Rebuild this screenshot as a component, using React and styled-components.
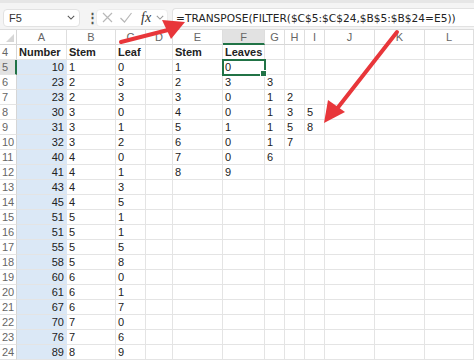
import React from "react"
import styled, { createGlobalStyle } from "styled-components"

const GlobalStyle = createGlobalStyle`
  html, body {
    margin: 0;
    padding: 0;
    background: #ffffff;
    overflow: hidden;
  }
  body {
    font-family: "Liberation Sans", Arial, sans-serif;
  }
`

const COLS = ["A", "B", "C", "D", "E", "F", "G", "H", "I", "J", "K", "L"]
const WIDTHS = "17px 50px 49px 30px 27px 50px 42px 20px 20px 20px 50px 50px 1fr"

const colA = [10, 23, 23, 30, 31, 32, 40, 41, 43, 45, 51, 51, 55, 58, 60, 61, 67, 70, 76, 89]
const colB = [1, 2, 2, 3, 3, 3, 4, 4, 4, 4, 5, 5, 5, 5, 6, 6, 6, 7, 7, 8]
const colC = [0, 3, 3, 0, 1, 2, 0, 1, 3, 5, 1, 1, 5, 8, 0, 1, 7, 0, 6, 9]
const leaves = [[0], [3, 3], [0, 1, 2], [0, 1, 3, 5], [1, 1, 5, 8], [0, 1, 7], [0, 6], [9]]

const App = () => {
  const rows = []
  // header row 4
  rows.push({
    n: 4,
    cells: ["Number", "Stem", "Leaf", "", "Stem", "Leaves", "", "", "", "", "", ""],
    bold: true,
  })
  for (let i = 0; i < 20; i++) {
    const l = leaves[i] || []
    rows.push({
      n: i + 5,
      cells: [
        colA[i],
        colB[i],
        colC[i],
        "",
        i < 8 ? i + 1 : "",
        l[0] ?? "",
        l[1] ?? "",
        l[2] ?? "",
        l[3] ?? "",
        "",
        "",
        "",
      ],
    })
  }

  return (
    <Page>
      <GlobalStyle />
      <FormulaBar>
        <NameBox>
          <span>F5</span>
          <Chevron viewBox="0 0 10 6">
            <path d="M1 1l4 4 4-4" />
          </Chevron>
        </NameBox>
        <Dots>⋮</Dots>
        <IconGroup>
          <svg width="13" height="13" viewBox="0 0 13 13">
            <path d="M2 2l9 9M11 2l-9 9" stroke="#b8b8b8" strokeWidth="1.2" fill="none" />
          </svg>
          <svg width="14" height="13" viewBox="0 0 14 13">
            <path d="M1.5 7l4 4 7-9" stroke="#b8b8b8" strokeWidth="1.2" fill="none" />
          </svg>
          <Fx>fx</Fx>
          <Chevron viewBox="0 0 10 6" $light>
            <path d="M1 1l4 4 4-4" />
          </Chevron>
        </IconGroup>
        <FormulaInput>=TRANSPOSE(FILTER($C$5:$C$24,$B$5:$B$24=E5))</FormulaInput>
      </FormulaBar>

      <Sheet>
        <Corner>
          <svg width="8" height="8" viewBox="0 0 8 8">
            <path d="M8 0v8H0z" fill="#d6d6d6" />
          </svg>
        </Corner>
        {COLS.map((c) => (
          <ColHead key={c} $active={c === "F"}>
            {c}
          </ColHead>
        ))}
        {rows.map((r) => (
          <React.Fragment key={r.n}>
            <RowHead $active={r.n === 5}>{r.n}</RowHead>
            {r.cells.map((v, j) => (
              <Cell
                key={j}
                $bold={r.bold}
                $right={j === 0 && !r.bold}
                $blue={j === 0 && !r.bold}
                $selected={r.n === 5 && j === 5}
              >
                {v}
                {r.n === 5 && j === 5 && <Handle />}
              </Cell>
            ))}
          </React.Fragment>
        ))}
      </Sheet>

      <Arrows width="474" height="361" viewBox="0 0 474 361">
        <g stroke="#e8363a" strokeWidth="4" strokeLinecap="round">
          <line x1="121" y1="42" x2="168" y2="30" />
          <line x1="397" y1="32" x2="336" y2="110" />
        </g>
        <g fill="#e8363a">
          <polygon points="185,22 162,20 171,39" />
          <polygon points="324,123 328,100 345,112" />
        </g>
      </Arrows>
    </Page>
  )
}

export default App

const Page = styled.div`
  position: relative;
  width: 474px;
  height: 361px;
  overflow: hidden;
  background: #ffffff;
`

const FormulaBar = styled.div`
  height: 30px;
  box-sizing: border-box;
  display: flex;
  align-items: center;
  padding: 3px 0 0 3px;
  background: #f4f4f4;
  border-top: 3px solid #e6e6e6;
  border-bottom: 1px solid #dcdcdc;
`

const NameBox = styled.div`
  width: 77px;
  height: 18px;
  box-sizing: border-box;
  display: flex;
  align-items: center;
  justify-content: space-between;
  padding: 0 4px 0 5px;
  background: #ffffff;
  border: 1px solid #e2e2e2;
  border-radius: 4px;
  font-size: 11px;
  color: #333;
`

const Chevron = styled.svg`
  width: 8px;
  height: 5px;
  fill: none;
  stroke: ${(p) => (p.$light ? "#9a9a9a" : "#555")};
  stroke-width: 1.3;
`

const Dots = styled.span`
  font-size: 13px;
  color: #555;
  font-weight: bold;
  width: 6px;
  margin: 0 4px 0 6px;
  text-align: center;
`

const IconGroup = styled.div`
  height: 18px;
  box-sizing: border-box;
  display: flex;
  align-items: center;
  gap: 5px;
  padding: 0 3px 0 4px;
  margin-right: 4px;
  background: #ffffff;
  border-radius: 4px;
  border: 1px solid #ececec;
`

const Fx = styled.span`
  font-family: "Liberation Serif", "Times New Roman", serif;
  font-style: italic;
  font-size: 14px;
  color: #333;
  margin-left: 3px;
  line-height: 1;
`

const FormulaInput = styled.div`
  flex: 1;
  height: 19px;
  box-sizing: border-box;
  display: flex;
  align-items: center;
  padding-left: 3px;
  background: #ffffff;
  border: 1px solid #e2e2e2;
  border-right: none;
  border-radius: 4px 0 0 4px;
  font-family: "DejaVu Sans", sans-serif;
  font-size: 10.6px;
  color: #222;
  white-space: nowrap;
`

const Sheet = styled.div`
  display: grid;
  grid-template-columns: ${WIDTHS};
  grid-auto-rows: 15px;
  font-size: 11px;
  color: #222;
`

const Corner = styled.div`
  display: flex;
  align-items: flex-end;
  justify-content: flex-end;
  padding: 0 2px 2px 0;
  background: #ffffff;
  border-right: 1px solid #d6d6d6;
  border-bottom: 1px solid #d6d6d6;
`

const ColHead = styled.div`
  display: flex;
  align-items: center;
  justify-content: center;
  box-sizing: border-box;
  color: #666;
  font-size: 11px;
  background: ${(p) => (p.$active ? "#e2e2e2" : "#ffffff")};
  border-right: 1px solid #dedede;
  border-bottom: ${(p) => (p.$active ? "2px solid #217346" : "1px solid #d6d6d6")};
`

const RowHead = styled.div`
  display: flex;
  align-items: center;
  padding-left: 2px;
  box-sizing: border-box;
  color: #666;
  font-size: 11px;
  background: ${(p) => (p.$active ? "#e2e2e2" : "#ffffff")};
  border-right: ${(p) => (p.$active ? "2px solid #217346" : "1px solid #d6d6d6")};
  border-bottom: 1px solid #e4e4e4;
`

const Cell = styled.div`
  position: relative;
  display: flex;
  align-items: center;
  justify-content: ${(p) => (p.$right ? "flex-end" : "flex-start")};
  box-sizing: border-box;
  padding: 0 2px;
  white-space: nowrap;
  font-weight: ${(p) => (p.$bold ? "bold" : "normal")};
  background: ${(p) => (p.$blue ? "#dbe8f6" : "#ffffff")};
  border-right: 1px solid ${(p) => (p.$blue ? "#dbe8f6" : "#e4e4e4")};
  border-bottom: 1px solid #e4e4e4;
  ${(p) =>
    p.$selected &&
    `
    outline: 2px solid #217346;
    outline-offset: -1px;
    z-index: 1;
  `}
`

const Handle = styled.span`
  position: absolute;
  right: -3px;
  bottom: -3px;
  width: 5px;
  height: 5px;
  background: #217346;
  border: 1px solid #ffffff;
`

const Arrows = styled.svg`
  position: absolute;
  left: 0;
  top: 0;
  pointer-events: none;
  z-index: 5;
`
